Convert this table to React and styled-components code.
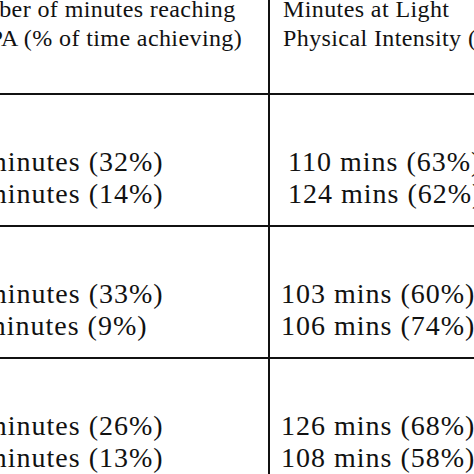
import React from "react";
import styled, { createGlobalStyle, css } from "styled-components";

const GlobalStyle = createGlobalStyle`
  html, body {
    margin: 0;
    padding: 0;
    background: #ffffff;
    overflow: hidden;
  }
  body {
    width: 474px;
    height: 474px;
  }
`;

const Table = styled.div`
  width: 760px;
  margin: -5px 0 0 -60px;
  font-family: "Liberation Serif", "Times New Roman", serif;
  color: #111111;
`;

const Row = styled.div`
  display: grid;
  grid-template-columns: 330px 1fr;
  ${(props) =>
    props.ruled &&
    css`
      border-top: 2px solid #111111;
    `}
`;

const Cell = styled.div`
  box-sizing: border-box;
  white-space: nowrap;
  overflow: hidden;
  padding-left: ${(props) => props.indent}px;
  ${(props) =>
    props.divider &&
    css`
      border-right: 2px solid #111111;
    `}
`;

const HeadCell = styled(Cell)`
  font-size: 24px;
  line-height: 29px;
  letter-spacing: 0.4px;
  padding-bottom: 40px;
`;

const BodyCell = styled(Cell)`
  font-size: 28px;
  line-height: 32px;
  letter-spacing: 1px;
  padding-top: 51px;
  padding-bottom: 15px;
`;

const Line = styled.div``;

const rows = [
  {
    left: ["36 minutes (32%)", "16 minutes (14%)"],
    right: ["110 mins (63%)", "124 mins (62%)"],
    indent: 18,
  },
  {
    left: ["44 minutes (33%)", "11 minutes (9%)"],
    right: ["103 mins (60%)", "106 mins (74%)"],
    indent: 11,
  },
  {
    left: ["41 minutes (26%)", "15 minutes (13%)"],
    right: ["126 mins (68%)", "108 mins (58%)"],
    indent: 11,
  },
];

export default function App() {
  return (
    <>
      <GlobalStyle />
      <Table>
        <Row>
          <HeadCell divider indent={10}>
            <Line>Number of minutes reaching</Line>
            <Line>MVPA (% of time achieving)</Line>
          </HeadCell>
          <HeadCell indent={13}>
            <Line>Minutes at Light</Line>
            <Line>Physical Intensity (% of time)</Line>
          </HeadCell>
        </Row>
        {rows.map((row, i) => (
          <Row ruled key={i}>
            <BodyCell divider indent={7}>
              {row.left.map((t) => (
                <Line key={t}>{t}</Line>
              ))}
            </BodyCell>
            <BodyCell indent={row.indent}>
              {row.right.map((t) => (
                <Line key={t}>{t}</Line>
              ))}
            </BodyCell>
          </Row>
        ))}
      </Table>
    </>
  );
}
